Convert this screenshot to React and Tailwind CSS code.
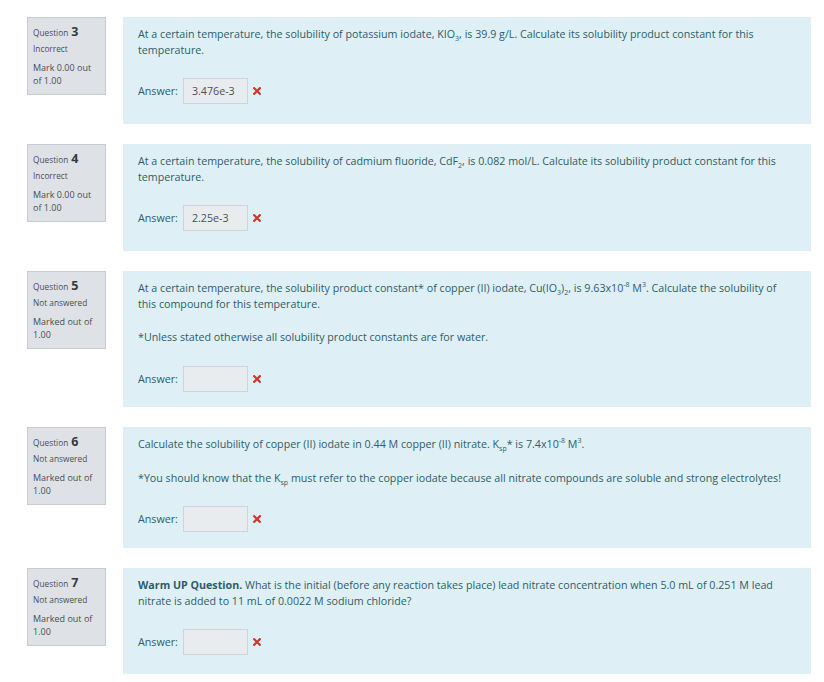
import React from "react";

const font = { fontFamily: '"Open Sans", "Noto Sans", sans-serif' };

function Info({ n, status, mark }) {
  return (
    <div className="w-[79px] shrink-0 self-start bg-[#dee2e6] border border-[#c8ccd0] px-[5px] pt-[5px] pb-[7px] text-[#4a4d50]">
      <div className="flex items-baseline leading-[18px]">
        <span className="text-[8.3px]">Question</span>
        <span className="ml-[3px] text-[12.5px] font-bold text-[#373a3c]">{n}</span>
      </div>
      <div className="text-[8.3px] leading-[12px] mt-[1px]">{status}</div>
      <div className="text-[9px] leading-[13px] mt-[6px]">{mark}</div>
    </div>
  );
}

function X() {
  return (
    <svg width="8" height="8" viewBox="0 0 10 10" className="ml-[5px]">
      <path d="M1.5 1.5 L8.5 8.5 M8.5 1.5 L1.5 8.5" stroke="#d2352a" strokeWidth="2.8" strokeLinecap="square" />
    </svg>
  );
}

function Answer({ value }) {
  return (
    <div className="flex items-center">
      <span className="mr-[5px]">Answer:</span>
      <div className="w-[65px] h-[26px] bg-[#e9ecef] border border-[#ced4da] flex items-center px-[8px] text-[#495057]">
        {value}
      </div>
      <X />
    </div>
  );
}

function Q({ n, status, mark, children, value, gap, pb }) {
  return (
    <div className="flex gap-[17px]">
      <Info n={n} status={status} mark={mark} />
      <div className={`flex-1 bg-[#def0f6] text-[#2f5c68] text-[10.7px] leading-[16px] pl-[15px] pr-[20px] pt-[9px] ${pb}`}>
        {children}
        <div className={gap}>
          <Answer value={value} />
        </div>
      </div>
    </div>
  );
}

const sub = "text-[7px] align-sub leading-none";
const sup = "text-[7px] align-super leading-none";

export default function App() {
  return (
    <div className="w-[824px] h-[682px] bg-white overflow-hidden" style={font}>
      <div className="pl-[27px] pr-[13px] pt-[17px] flex flex-col gap-[20px]">
        <Q n="3" status="Incorrect" mark="Mark 0.00 out of 1.00" value="3.476e-3" gap="mt-[20px]" pb="pb-[20px]">
          <p>
            At a certain temperature, the solubility of potassium iodate, KIO<span className={sub}>3</span>, is 39.9 g/L. Calculate its solubility product constant for this temperature.
          </p>
        </Q>
        <Q n="4" status="Incorrect" mark="Mark 0.00 out of 1.00" value="2.25e-3" gap="mt-[20px]" pb="pb-[20px]">
          <p>
            At a certain temperature, the solubility of cadmium fluoride, CdF<span className={sub}>2</span>, is 0.082 mol/L. Calculate its solubility product constant for this temperature.
          </p>
        </Q>
        <Q n="5" status="Not answered" mark="Marked out of 1.00" value="" gap="mt-[21px]" pb="pb-[15px]">
          <p>
            At a certain temperature, the solubility product constant* of copper (II) iodate, Cu(IO<span className={sub}>3</span>)<span className={sub}>2</span>, is 9.63x10<span className={sup}>-8</span> M<span className={sup}>3</span>. Calculate the solubility of this compound for this temperature.
          </p>
          <p className="mt-[17px]">*Unless stated otherwise all solubility product constants are for water.</p>
        </Q>
        <Q n="6" status="Not answered" mark="Marked out of 1.00" value="" gap="mt-[20px]" pb="pb-[16px]">
          <p>
            Calculate the solubility of copper (II) iodate in 0.44 M copper (II) nitrate. K<span className={sub}>sp</span>* is 7.4x10<span className={sup}>-8</span> M<span className={sup}>3</span>.
          </p>
          <p className="mt-[17px]">
            *You should know that the K<span className={sub}>sp</span> must refer to the copper iodate because all nitrate compounds are soluble and strong electrolytes!
          </p>
        </Q>
        <Q n="7" status="Not answered" mark="Marked out of 1.00" value="" gap="mt-[20px]" pb="pb-[19px]">
          <p>
            <span className="font-bold">Warm UP Question.</span> What is the initial (before any reaction takes place) lead nitrate concentration when 5.0 mL of 0.251 M lead nitrate is added to 11 mL of 0.0022 M sodium chloride?
          </p>
        </Q>
      </div>
    </div>
  );
}
